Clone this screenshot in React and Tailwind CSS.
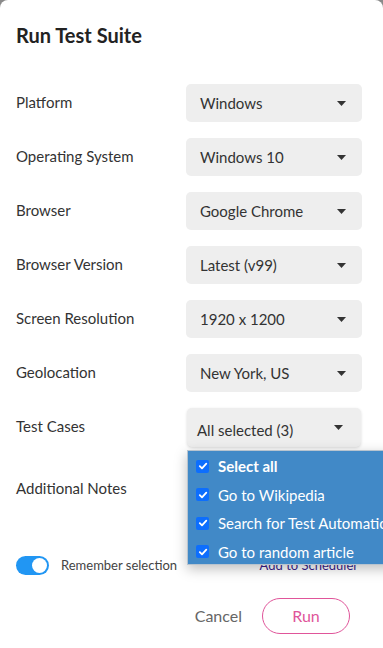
import React from 'react';

const FIELDS = [
  { label: "Platform", value: "Windows" },
  { label: "Operating System", value: "Windows 10" },
  { label: "Browser", value: "Google Chrome" },
  { label: "Browser Version", value: "Latest (v99)" },
  { label: "Screen Resolution", value: "1920 x 1200" },
  { label: "Geolocation", value: "New York, US" },
];

const CASES = [
  { name: "Select all", bold: true },
  { name: "Go to Wikipedia" },
  { name: "Search for Test Automation" },
  { name: "Go to random article" },
];

function Caret() {
  return (
    <svg width="9" height="5" viewBox="0 0 9 5" className="shrink-0">
      <path d="M0 0h9L4.5 5z" fill="#333" />
    </svg>
  );
}

function Check() {
  return (
    <span className="w-[13px] h-[13px] rounded-[2px] bg-[#0d6efd] flex items-center justify-center shrink-0">
      <svg width="10" height="10" viewBox="0 0 10 10">
        <path d="M1.8 5.2l2.2 2.2 4.3-4.8" stroke="#fff" strokeWidth="1.8" fill="none" strokeLinecap="round" strokeLinejoin="round" />
      </svg>
    </span>
  );
}

export default function App() {
  return (
    <div className="w-[383px] h-[648px] bg-[#8a8a8a] font-['Lato','Liberation_Sans',sans-serif] overflow-hidden">
      <div className="relative w-full h-full bg-white rounded-t-[8px] px-4 text-[#333]">
        {/* ── Title ── */}
        <h1 className="pt-[22px] text-[20px] leading-[26px] font-bold text-[#222]">Run Test Suite</h1>

        {/* ── Fields ── */}
        <div className="mt-[36px] flex flex-col gap-4">
          {FIELDS.map(f => (
            <div key={f.label} className="flex items-center">
              <div className="w-[170px] text-[15px] -mt-[2px]">{f.label}</div>
              <div className="w-[176px] h-[38px] bg-[#eee] rounded-[5px] pl-[14px] pr-[16px] flex items-center justify-between text-[15px] text-[#333]">
                <span>{f.value}</span>
                <Caret />
              </div>
            </div>
          ))}
          <div className="flex items-center">
            <div className="w-[170px] text-[15px] -mt-[2px]">Test Cases</div>
            <div className="w-[174px] h-[39px] bg-[#eee] rounded-[5px] pl-[10px] pr-[18px] flex items-center justify-between text-[15px] shadow-[0_1px_3px_rgba(0,0,0,0.15)] ml-[1px]">
              <span className="mt-[6px]">All selected (3)</span>
              <Caret />
            </div>
          </div>
        </div>

        <div className="mt-[30px] text-[15px]">Additional Notes</div>

        {/* ── Toggle + scheduler ── */}
        <div className="mt-[56px] flex items-center">
          <div className="w-[33px] h-[19px] rounded-full bg-[#2196f3] flex items-center justify-end pr-[2px]">
            <span className="w-[15px] h-[15px] rounded-full bg-white" />
          </div>
          <span className="ml-[12px] text-[13px] text-[#444]">Remember selection</span>
          <span className="ml-auto mr-[9px] text-[13px] text-[#3b1f8c]">Add to Scheduler</span>
        </div>

        {/* ── Footer ── */}
        <div className="mt-[23px] flex items-center justify-end pr-[17px]">
          <button className="text-[16px] text-[#666] mr-[20px]">Cancel</button>
          <button className="w-[88px] h-[36px] rounded-[18px] border border-[#e0559a] text-[16px] text-[#e0559a]">Run</button>
        </div>

        {/* ── Open multiselect panel ── */}
        <div className="absolute left-[187px] top-[450px] w-[230px] h-[115px] bg-[#4189c7] border border-[#b8c4cf] shadow-[0_4px_12px_rgba(0,0,0,0.25)] pt-[1px]">
          {CASES.map(c => (
            <div key={c.name} className="h-[28.5px] flex items-center pl-[8px] gap-[9px] text-white text-[15px] whitespace-nowrap">
              <Check />
              <span className={c.bold ? "font-bold" : ""}>{c.name}</span>
            </div>
          ))}
        </div>
      </div>
    </div>
  );
}
